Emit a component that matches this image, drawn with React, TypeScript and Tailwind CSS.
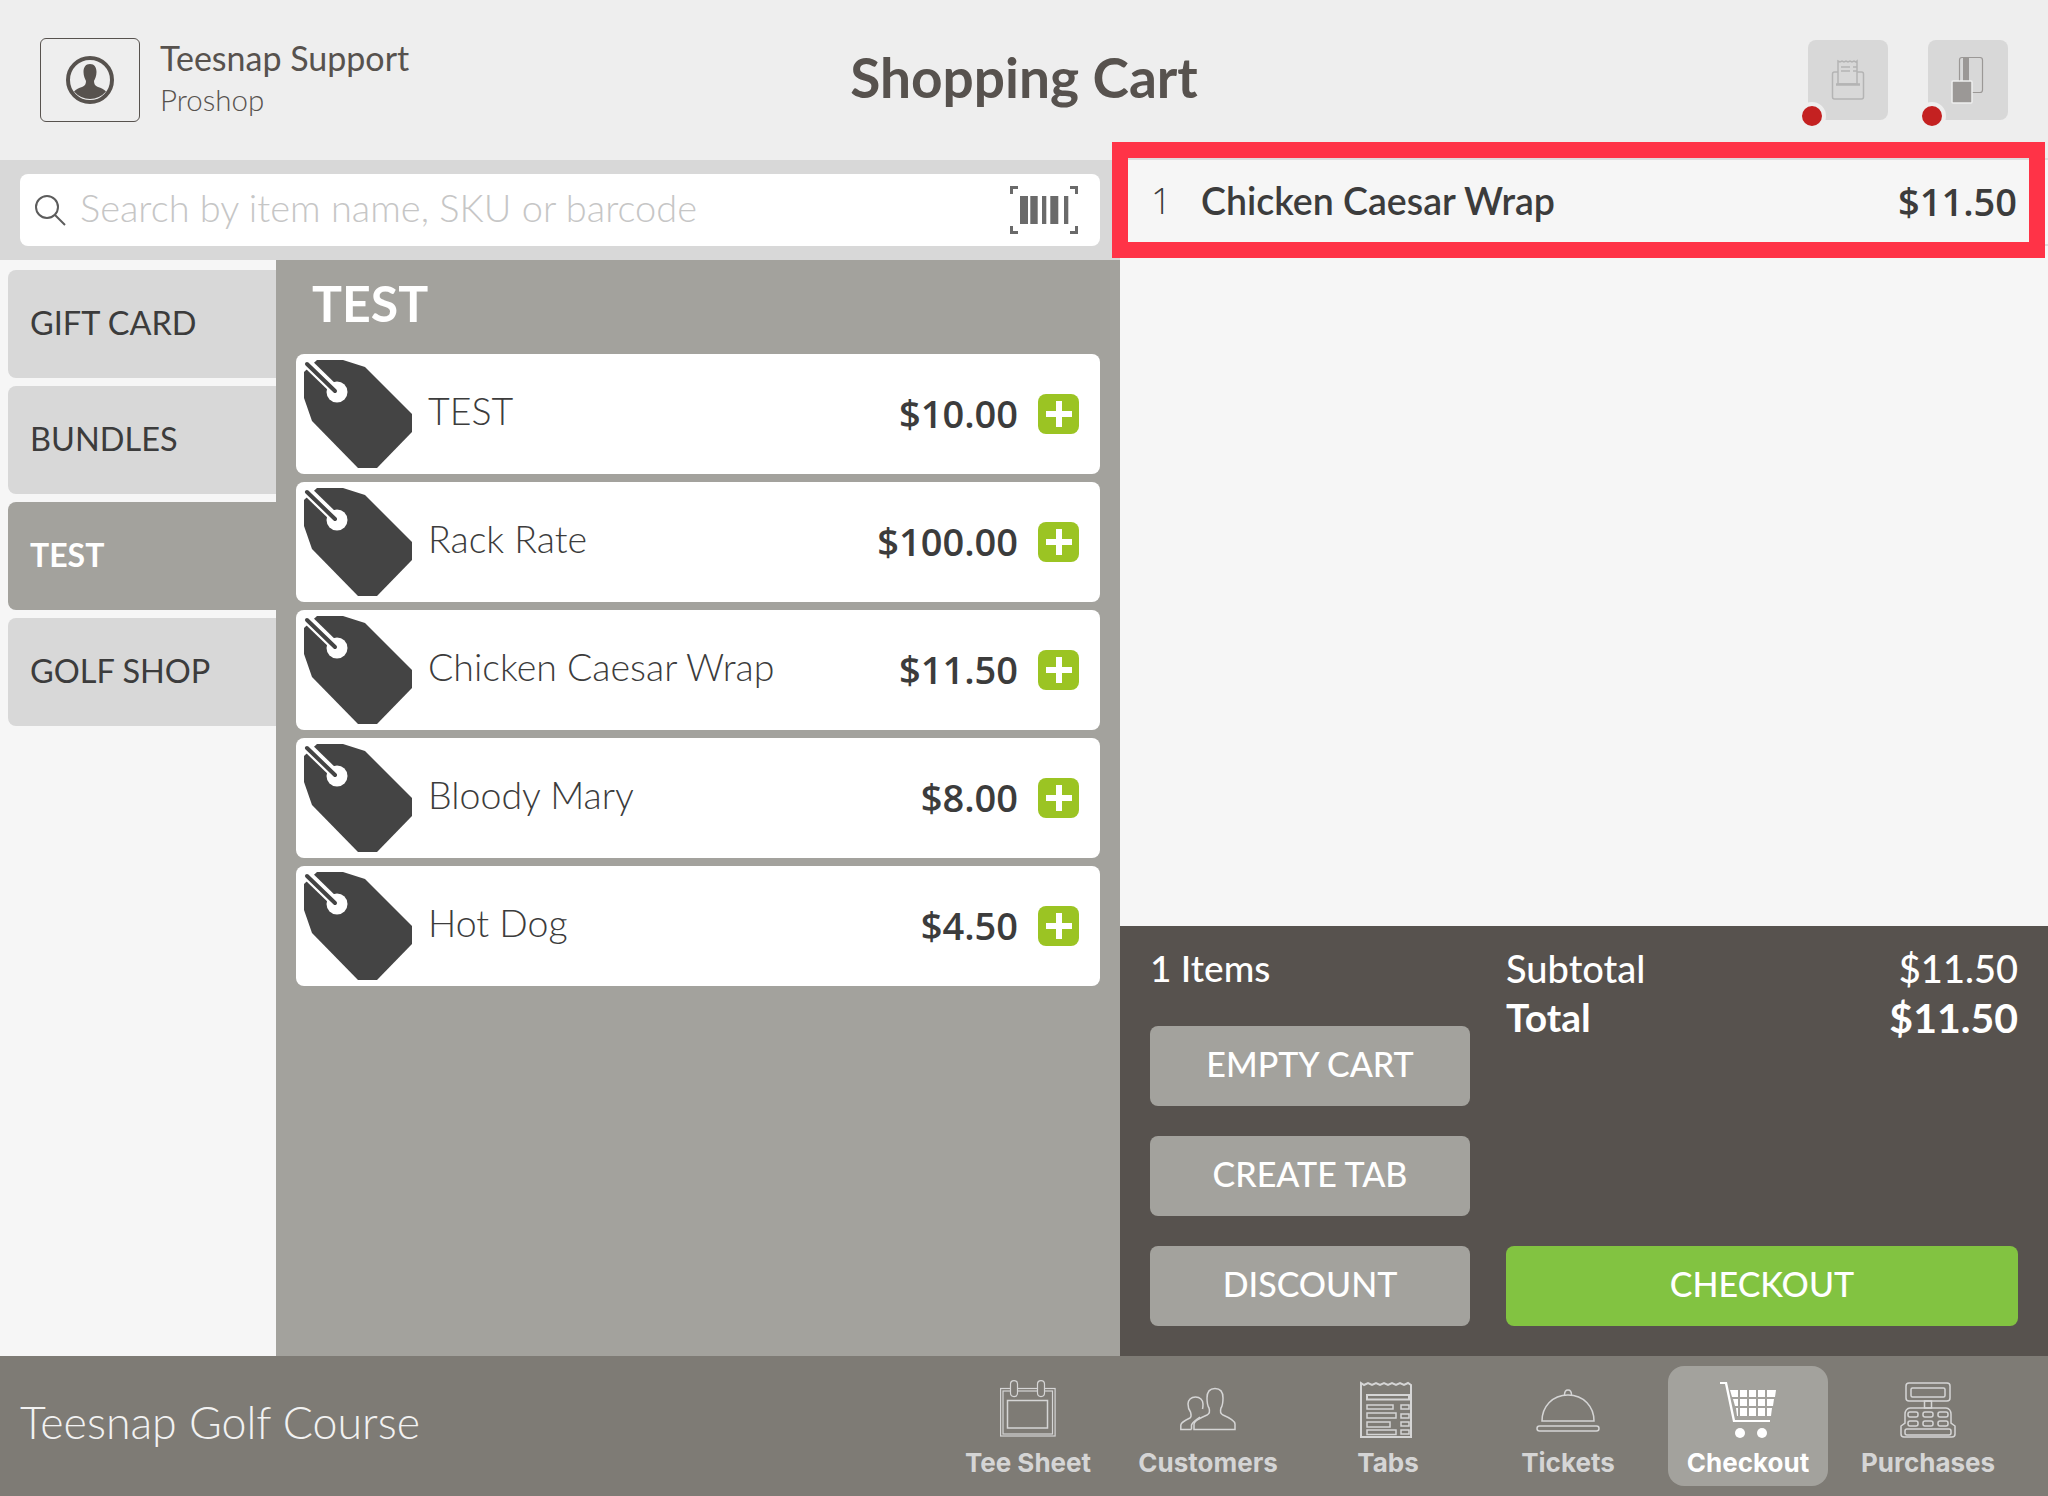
const categories = [
  { name: "GIFT CARD", active: false },
  { name: "BUNDLES", active: false },
  { name: "TEST", active: true },
  { name: "GOLF SHOP", active: false },
];

const products = [
  { name: "TEST", price: "$10.00" },
  { name: "Rack Rate", price: "$100.00" },
  { name: "Chicken Caesar Wrap", price: "$11.50" },
  { name: "Bloody Mary", price: "$8.00" },
  { name: "Hot Dog", price: "$4.50" },
];

function PersonIcon() {
  return (
    <svg width="48" height="48" viewBox="0 0 48 48">
      <circle cx="24" cy="24" r="22" fill="none" stroke="#57524e" strokeWidth="4" />
      <path
        d="M24 8c-4.500 0-6.500 3.500-6.500 8 0 4 1.500 7 2.500 9 0 3-1 5-4 6-3 1-6 2-8 4.500a21 21 0 0 0 32 0c-2-2.500-5-3.500-8-4.500-3-1-4-3-4-6 1-2 2.500-5 2.500-9C30.500 11.500 28.500 8 24 8z"
        fill="#57524e"
      />
    </svg>
  );
}

function PrinterIcon() {
  return (
    <svg width="80" height="80" viewBox="0 0 80 80" fill="none" stroke="#b4b4b4" strokeWidth="1.500">
      <rect x="24.500" y="32" width="31" height="27" rx="2" />
      <path d="M30 44V21l2 1 2-1 2 1 2-1 2 1 2-1 2 1 2-1 2 1 1-1v23z" fill="#d8d8d8" />
      <path d="M28 44.500h24" strokeWidth="2.500" />
      <path d="M33 27h9M45 27h4M33 31h9M45 31h4" />
    </svg>
  );
}

function CardIcon() {
  return (
    <svg width="80" height="80" viewBox="0 0 80 80" fill="none">
      <rect x="31.500" y="17.500" width="23" height="35" rx="2.500" stroke="#9b9896" strokeWidth="1.200" />
      <rect x="35" y="18" width="6" height="26" fill="#9b9896" />
      <rect x="24" y="41" width="20" height="22" rx="1" fill="#9b9896" stroke="#eeeeee" strokeWidth="1.500" />
    </svg>
  );
}

function SearchIcon() {
  return (
    <svg width="34" height="32" viewBox="0 0 34 32" fill="none" stroke="#5c5c5c" strokeWidth="2">
      <circle cx="13" cy="13" r="11" />
      <path d="M21 21l10 10" />
    </svg>
  );
}

function BarcodeIcon() {
  return (
    <svg width="68" height="48" viewBox="0 0 68 48" fill="#6a6a6a">
      <path d="M0 0h8v3H3v5H0zM60 0h8v8h-3V3h-5zM0 40h3v5h5v3H0zM65 40h3v8h-8v-3h5z" />
      <rect x="10" y="10" width="8" height="28" />
      <rect x="20.300" y="10" width="7.400" height="28" />
      <rect x="32" y="10" width="4.300" height="28" />
      <rect x="40.300" y="10" width="8" height="28" />
      <rect x="54" y="10" width="4.300" height="28" />
    </svg>
  );
}

function TagIcon() {
  return (
    <svg width="108" height="108" viewBox="0 0 108 108" className="shrink-0">
      <path d="M13 0h26l22 7 47 47v18l-35 36H54L8 61 0 38V12z" fill="#444444" />
      <path d="M-2 -2L33 32" stroke="#ffffff" strokeWidth="10" />
      <circle cx="33" cy="32" r="10.500" fill="#ffffff" />
      <path d="M3 4l28 27" stroke="#444444" strokeWidth="4" strokeLinecap="round" />
    </svg>
  );
}

function PlusButton() {
  return (
    <div className="w-[41px] h-10 rounded-lg bg-[#9bc423] flex items-center justify-center ml-5">
      <svg width="26" height="26" viewBox="0 0 26 26" fill="#ffffff">
        <path d="M10 0h6v10h10v6H16v10h-6V16H0v-6h10z" />
      </svg>
    </div>
  );
}

function TeeSheetIcon() {
  return (
    <svg width="56" height="58" viewBox="0 0 56 58" fill="none" stroke="#d5d5d5" strokeWidth="1.200">
      <rect x="0.600" y="8.500" width="54.500" height="47.500" />
      <rect x="3" y="11" width="49.500" height="43" />
      <rect x="7.500" y="20.500" width="40" height="27.500" strokeWidth="1.500" />
      <rect x="10.500" y="0.600" width="7" height="16" rx="3.500" fill="#7e7b75" />
      <rect x="37.500" y="0.600" width="7" height="16" rx="3.500" fill="#7e7b75" />
    </svg>
  );
}

function CustomersIcon() {
  return (
    <svg width="56" height="58" viewBox="0 0 56 58" fill="none" stroke="#d5d5d5" strokeWidth="1.500">
      <path d="M14 49.500V44c0-3 6-6 13-9 3-1.500 3-4 2-7-2-3-2-6-2-10 0-6 3-9.500 8-9.500s8 3.500 8 9.500c0 4 0 7-2 10-1 3-1 5.500 2 7 7 3 12 6 12 9v5.500z" />
      <path d="M11.500 49.500H0.800V45c0.500-3 5-5 9.200-7 2-2 1-4 .5-6-1.500-2-2.500-5-2.500-8 0-4 3-7 7.500-7s7.500 3 7.500 7c0 2 0 3-.5 5" />
      <path d="M11.500 49.500V45c1-3 5-5 8.500-8" />
    </svg>
  );
}

function TabsIcon() {
  return (
    <svg width="56" height="58" viewBox="0 -2 56 58" fill="none" stroke="#d5d5d5" strokeWidth="1.500">
      <path d="M1 55V1l3 2 4-2 4 2 4-2 4 2 4-2 4 2 4-2 4 2 4-2 4 2 4-2 3 2v52z" strokeWidth="2" />
      <rect x="7" y="13" width="42" height="4.500" strokeWidth="2" />
      <rect x="7" y="23" width="26" height="4" />
      <rect x="7" y="31" width="29" height="5" />
      <rect x="7" y="40" width="23" height="5" />
      <rect x="7" y="48" width="29" height="4.500" />
      <rect x="41" y="23" width="8" height="4" />
      <rect x="41" y="32" width="8" height="4" />
      <rect x="41" y="40" width="8" height="4" />
      <rect x="41" y="48" width="8" height="4" />
    </svg>
  );
}

function TicketsIcon() {
  return (
    <svg width="64" height="58" viewBox="0 0 64 58" fill="none" stroke="#d5d5d5" strokeWidth="1.500">
      <path d="M6 41c0-14 10-26 26-26s26 12 26 26z" />
      <path d="M28.500 15c0-3 1.500-5 3.500-5s3.500 2 3.500 5" />
      <rect x="1" y="46" width="62" height="5" rx="2.500" />
    </svg>
  );
}

function CartIcon() {
  return (
    <svg width="56" height="58" viewBox="0 -2 56 58" fill="#ffffff">
      <path d="M0 0h7l8 38h35v2H13L5 2H0z" />
      <path d="M10 8h46l-1 7H12zM13 17h41l-1 7H15zM16 26h36l-1 8H17z" />
      <path d="M18 8h2v26h-2zM27 8h2v26h-2zM36 8h2v26h-2zM45 8h2v26h-2z" fill="#a3a29d" />
      <circle cx="20" cy="51" r="5" />
      <circle cx="42" cy="51" r="5" />
    </svg>
  );
}

function PurchasesIcon() {
  return (
    <svg width="56" height="58" viewBox="0 -2 56 58" fill="none" stroke="#d5d5d5" strokeWidth="1.500">
      <rect x="6" y="1" width="44" height="18" rx="3" />
      <rect x="11" y="6" width="34" height="9" rx="1.500" />
      <rect x="24.500" y="19" width="7" height="7" />
      <path d="M10 26h36c3 0 5 3 5 6v9l4 3v8c0 2-1 3-3 3H4c-2 0-3-1-3-3v-8l4-3v-9c0-3 2-6 5-6z" />
      <rect x="8" y="30" width="10" height="5" rx="2" />
      <rect x="23" y="30" width="10" height="5" rx="2" />
      <rect x="38" y="30" width="10" height="5" rx="2" />
      <rect x="8" y="39" width="10" height="5" rx="2" />
      <rect x="23" y="39" width="10" height="5" rx="2" />
      <rect x="38" y="39" width="10" height="5" rx="2" />
      <rect x="5" y="47" width="46" height="6" rx="2" />
    </svg>
  );
}

const navItems = [
  { label: "Tee Sheet", icon: <TeeSheetIcon />, active: false },
  { label: "Customers", icon: <CustomersIcon />, active: false },
  { label: "Tabs", icon: <TabsIcon />, active: false },
  { label: "Tickets", icon: <TicketsIcon />, active: false },
  { label: "Checkout", icon: <CartIcon />, active: true },
  { label: "Purchases", icon: <PurchasesIcon />, active: false },
];

function ActionButton({ label }: { label: string }) {
  return (
    <button className="w-[320px] h-20 rounded-lg bg-[#a3a29d] text-white text-[34px] font-medium pb-[6px]">
      {label}
    </button>
  );
}

export default function App() {
  return (
    <div className="relative w-[2048px] h-[1496px] overflow-hidden flex flex-col bg-[#f6f6f6] font-['Lato',sans-serif] text-[#3c3c3c]">
      <header className="relative h-40 shrink-0 bg-[#eeeeee] flex items-center pl-10 pr-10">
        <div className="w-[100px] h-[84px] border border-[#57524e] rounded-md flex items-center justify-center">
          <PersonIcon />
        </div>
        <div className="ml-5 text-[#57524e] pb-[5px]">
          <div className="text-[34px] leading-[44px]">Teesnap Support</div>
          <div className="text-[29.500px] leading-[40px] font-light">Proshop</div>
        </div>
        <h1 className="absolute left-0 right-0 text-center text-[55px] font-bold text-[#57524e] pb-[6px]">Shopping Cart</h1>
        <div className="ml-auto flex gap-10">
          <div className="relative w-20 h-20 rounded-lg bg-[#d8d8d8]">
            <PrinterIcon />
            <span className="absolute left-[-10px] top-[62px] w-5 h-5 rounded-full bg-[#c42121] border-4 border-[#eeeeee] box-content" />
          </div>
          <div className="relative w-20 h-20 rounded-lg bg-[#d8d8d8]">
            <CardIcon />
            <span className="absolute left-[-10px] top-[62px] w-5 h-5 rounded-full bg-[#c42121] border-4 border-[#eeeeee] box-content" />
          </div>
        </div>
      </header>

      <main className="flex-1 flex min-h-0">
        <section className="w-[1120px] shrink-0 flex flex-col">
          <div className="h-[100px] shrink-0 bg-[#d8d8d8] pl-5 pr-5 pt-[14px]">
            <div className="h-[72px] rounded-lg bg-white flex items-center pl-[14px] pr-[22px]">
              <SearchIcon />
              <span className="ml-[12px] text-[38px] font-light text-[#c6c6c6] pb-[5px]">Search by item name, SKU or barcode</span>
              <div className="ml-auto">
                <BarcodeIcon />
              </div>
            </div>
          </div>
          <div className="flex-1 flex min-h-0">
            <nav className="w-[276px] shrink-0 pl-2 pt-[10px] flex flex-col gap-2">
              {categories.map((c) => (
                <div
                  key={c.name}
                  className={
                    c.active
                      ? "h-[108px] rounded-l-lg bg-[#a3a29d] text-white font-bold text-[32px] flex items-center pl-[22px] pb-[3px]"
                      : "h-[108px] rounded-l-lg bg-[#d8d8d8] text-[#3c3c3c] text-[32.500px] flex items-center pl-[22px] pb-[2px]"
                  }
                >
                  {c.name}
                </div>
              ))}
            </nav>
            <div className="flex-1 bg-[#a3a29d] px-5">
              <h2 className="h-[94px] pl-4 pb-2 flex items-center text-[50px] font-bold text-white">TEST</h2>
              <div className="flex flex-col gap-2">
                {products.map((p) => (
                  <div key={p.name} className="h-[120px] rounded-lg bg-white flex items-center pl-2 pr-[21px]">
                    <TagIcon />
                    <span className="ml-4 text-[37.500px] font-light pb-[6px]">{p.name}</span>
                    <span className="ml-auto text-[38px] font-semibold font-['Open_Sans',sans-serif] pb-[2px]">{p.price}</span>
                    <PlusButton />
                  </div>
                ))}
              </div>
            </div>
          </div>
        </section>

        <section className="flex-1 flex flex-col min-w-0">
          <div className="relative -mt-[2px] h-[88px] shrink-0 border-t-2 border-b-2 border-[#dddddd] flex items-center pl-[31px] pr-[31px] text-[36px] font-['Open_Sans',sans-serif]">
            <span className="w-[50px] font-light pb-[2px]">1</span>
            <span className="text-[37.500px] font-semibold font-['Lato',sans-serif] pb-[2px]">Chicken Caesar Wrap</span>
            <span className="ml-auto text-[38px] font-semibold pb-[2px]">$11.50</span>
          </div>
          <div className="mt-auto h-[430px] shrink-0 bg-[#57524e] text-white pl-[30px] pr-[30px] pt-[17px] flex gap-[36px]">
            <div className="w-[320px] shrink-0 flex flex-col">
              <div className="h-[50px] text-[37px] flex items-center font-medium">1 Items</div>
              <div className="mt-[33px] flex flex-col gap-[30px]">
                <ActionButton label="EMPTY CART" />
                <ActionButton label="CREATE TAB" />
                <ActionButton label="DISCOUNT" />
              </div>
            </div>
            <div className="flex-1 flex flex-col">
              <div className="h-[50px] text-[38px] flex items-center justify-between font-medium">
                <span>Subtotal</span>
                <span>$11.50</span>
              </div>
              <div className="h-[49px] text-[39px] flex items-center justify-between font-bold">
                <span>Total</span>
                <span className="text-[41px]">$11.50</span>
              </div>
              <button className="mt-auto mb-[30px] h-20 rounded-lg bg-[#82c341] text-white text-[34px] font-medium pb-[6px]">
                CHECKOUT
              </button>
            </div>
          </div>
        </section>
      </main>

      <footer className="h-[140px] shrink-0 bg-[#7e7b75] flex items-center pl-5 pr-10">
        <span className="text-[44.700px] font-light text-[#f2f2f2] pb-[6px]">Teesnap Golf Course</span>
        <div className="ml-auto flex gap-5">
          {navItems.map((item) => (
            <div
              key={item.label}
              className={
                item.active
                  ? "w-40 h-[120px] rounded-2xl bg-[#a3a29d] text-white flex flex-col items-center pt-[14px] font-['Inter',sans-serif] font-bold"
                  : "w-40 h-[120px] rounded-2xl text-[#d5d5d5] flex flex-col items-center pt-[14px] font-['Inter',sans-serif] font-bold"
              }
            >
              <div className="h-[58px] flex items-center justify-center">{item.icon}</div>
              <span className="mt-[9px] text-[26px] leading-8">{item.label}</span>
            </div>
          ))}
        </div>
      </footer>

      <div className="absolute left-[1112px] top-[142px] w-[933px] h-[116px] border-[16px] border-[#ff3347] pointer-events-none" />
    </div>
  );
}
